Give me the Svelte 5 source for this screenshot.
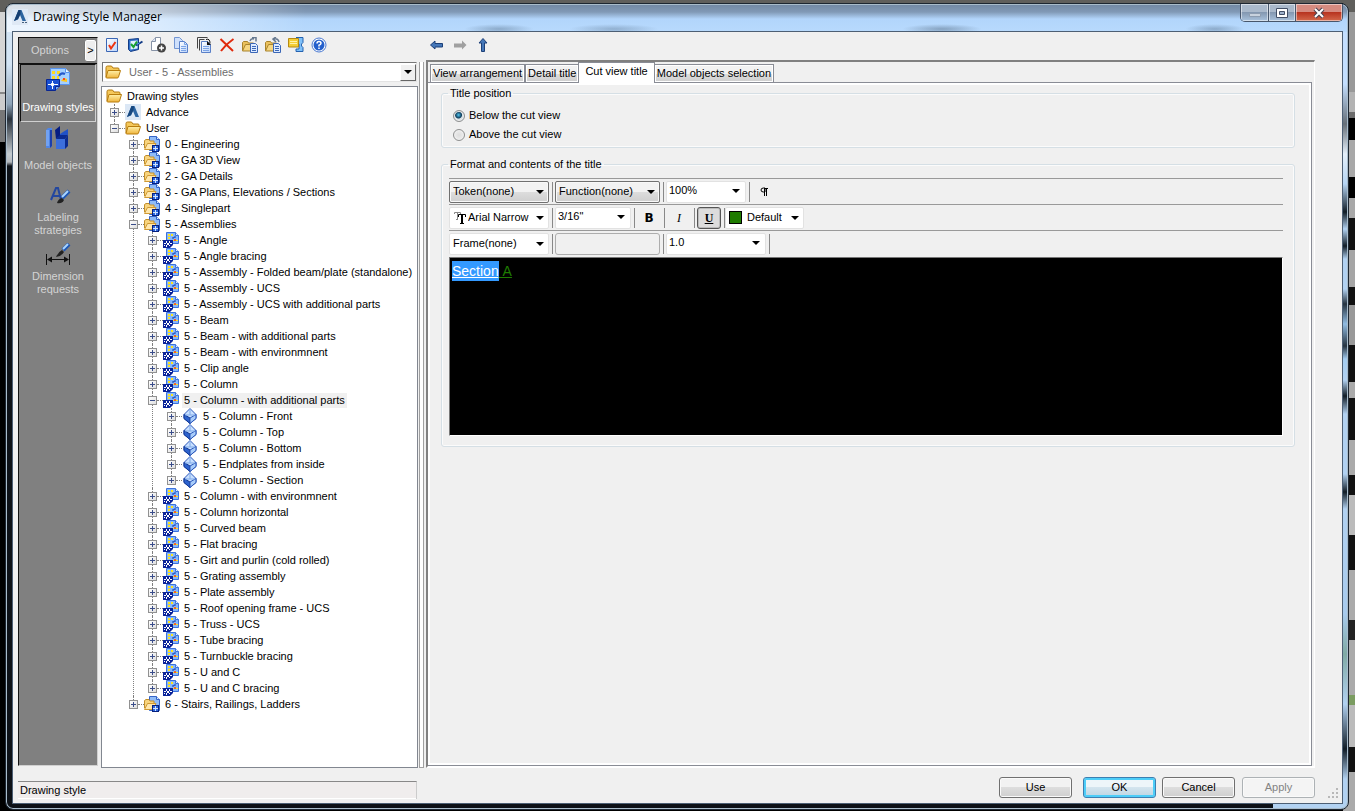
<script lang="ts">
    type Node = { name: string; icon: string; open?: boolean; selected?: boolean; children?: Node[] };

    const style = (name: string): Node => ({ name, icon: "style", open: false });
    const group = (name: string): Node => ({ name, icon: "group", open: false });
    const cube = (name: string): Node => ({ name, icon: "cube", open: false });

    let root: Node = $state({
        name: "Drawing styles",
        icon: "folder",
        open: true,
        children: [
            { name: "Advance", icon: "advance", open: false },
            {
                name: "User",
                icon: "folder",
                open: true,
                children: [
                    group("0 - Engineering"),
                    group("1 - GA 3D View"),
                    group("2 - GA Details"),
                    group("3 - GA Plans, Elevations / Sections"),
                    group("4 - Singlepart"),
                    {
                        name: "5 - Assemblies",
                        icon: "group",
                        open: true,
                        children: [
                            style("5 - Angle"),
                            style("5 - Angle bracing"),
                            style("5 - Assembly - Folded beam/plate (standalone)"),
                            style("5 - Assembly - UCS"),
                            style("5 - Assembly - UCS with additional parts"),
                            style("5 - Beam"),
                            style("5 - Beam - with additional parts"),
                            style("5 - Beam - with environmnent"),
                            style("5 - Clip angle"),
                            style("5 - Column"),
                            {
                                name: "5 - Column - with additional parts",
                                icon: "style",
                                open: true,
                                selected: true,
                                children: [
                                    cube("5 - Column - Front"),
                                    cube("5 - Column - Top"),
                                    cube("5 - Column - Bottom"),
                                    cube("5 - Endplates from inside"),
                                    cube("5 - Column - Section"),
                                ],
                            },
                            style("5 - Column - with environmnent"),
                            style("5 - Column horizontal"),
                            style("5 - Curved beam"),
                            style("5 - Flat bracing"),
                            style("5 - Girt and purlin (cold rolled)"),
                            style("5 - Grating assembly"),
                            style("5 - Plate assembly"),
                            style("5 - Roof opening frame - UCS"),
                            style("5 - Truss - UCS"),
                            style("5 - Tube bracing"),
                            style("5 - Turnbuckle bracing"),
                            style("5 - U and C"),
                            style("5 - U and C bracing"),
                        ],
                    },
                    group("6 - Stairs, Railings, Ladders"),
                ],
            },
        ],
    });

    const tools = ["check", "edit", "add", "copy", "paste", "delete", "export", "import", "archive", "help"];
    const tabs = ["View arrangement", "Detail title", "Cut view title", "Model objects selection"];
    const sections = [
        { icon: "styles", lines: ["Drawing styles"] },
        { icon: "objects", lines: ["Model objects"] },
        { icon: "labels", lines: ["Labeling", "strategies"] },
        { icon: "dims", lines: ["Dimension", "requests"] },
    ];

    let section = $state("styles");
    let tab = $state("Cut view title");
    let position = $state("below");
    let underline = $state(true);
</script>

{#snippet icon(name: string)}
    <svg class="icon" width="16" height="16" viewBox="0 0 16 16" aria-hidden="true">
        {#if name === "folder"}
            <path d="M1 13V3.500q0-1.500 1.500-1.500h4L8 4h5q1 0 1 1v2" fill="#f5c85a" stroke="#b47a10" />
            <path d="M1 13.500 3 6.500h12.500L13.500 13q-.3 1-1.300 1H2q-1 0-1-.5Z" fill="url(#gold)" stroke="#b87c0c" />
        {:else if name === "advance"}
            <rect width="16" height="16" fill="#dbe7f5" />
            <path d="M2 13 6.500 2h3L14 13h-3.500L8 7l-2 4.500Z" fill="#2c66a4" />
            <path d="m2 13 4-2 2.500-5 .5-4H6.500Z" fill="#17477f" />
        {:else if name === "group"}
            <path d="M5.500.500h7l3 3v11h-10Z" fill="#8fbbf7" stroke="#3464c8" />
            <path d="M12.500.500v3h3" fill="#d9ebff" stroke="#3464c8" />
            <path d="M.500 12V4.500L2 3.500h3l1 1.500h4v3" fill="#f8d47e" stroke="#c28e2a" />
            <path d="m.500 13.500 3-6h8.500l-3 6Z" fill="#ffe7ad" stroke="#cf9a35" />
            <rect x="8" y="9" width="7" height="7" fill="#06207d" />
            <rect x="9" y="10" width="5" height="5" fill="#2a66e0" />
            <path d="M11.500 10v5M9 12.500h5" stroke="#cfe3ff" />
        {:else if name === "style"}
            <path d="M3.500.500h9l3 3v8h-12Z" fill="#86b7fb" stroke="#3c72dd" />
            <path d="M12.500.500v3h3" fill="#e3f1ff" stroke="#3c72dd" />
            <path d="M5 2h2v2H5zM8 2h2v2H8zM5 5h2v2H5z" fill="#ffe41c" />
            <path d="M9 6h2V5h2" fill="none" stroke="#123fb2" />
            <path d="M11 7h2v2h-2z" fill="#f0622a" />
            <path d="M9 8h2v1H9zM13 8h2v1h-2z" fill="#ffe41c" />
            <path d="M0 8h10v5l-3 3H0Z" fill="#0a2399" />
            <path d="M3 9h1v2H3zM6 9h1v2H6zM1 11h2v1H1zM7 11h2v1H7zM4 11h2v2H4zM3 13h1v2H3zM6 13h1v1H6zM1 13h1v1H1z" fill="#fff" />
        {:else if name === "cube"}
            <path d="m8 .500 6 6v4l-6 5-6-5v-4Z" fill="#c8e0ff" stroke="#2b57ba" />
            <path d="m2 6.500 6 3.500v5.500l-6-5Z" fill="#2c62cd" stroke="#123793" />
            <path d="m14 6.500-6 3.500v5.500l6-5Z" fill="#a9cdfa" stroke="#2b57ba" />
            <path d="M8 1v6L3 7M8 7l5 0" fill="none" stroke="#7ea9e8" />
        {:else if name === "check"}
            <path d="M2.500 1.500h11v13h-11Z" fill="url(#paper)" stroke="#3a66b5" />
            <path d="m5 8 2 3.500L11.500 5" fill="none" stroke="#ed3411" stroke-width="2" />
        {:else if name === "edit"}
            <path d="m1.500 2.500 10-1v11l-8 2-2-2Z" fill="#2f70c9" stroke="#123b86" />
            <path d="m3.500 4 7-.5v8l-7 1Z" fill="#dff0ff" />
            <path d="m4 7 2.500 3L10 4.500" fill="none" stroke="#19a332" stroke-width="2" />
            <path d="m9 8.500 6.500-4" stroke="#123b86" stroke-width="2" />
            <path d="m10 7.500 3-2" stroke="#4b96ea" />
        {:else if name === "add"}
            <path d="M1.500 13.500v-9l4-4h5v13Z" fill="#fff" stroke="#8793a7" />
            <path d="M1.500 4.500h4v-4" fill="#dbe4f3" stroke="#8793a7" />
            <circle cx="11.500" cy="11" r="4.500" fill="#444" />
            <path d="M11.500 8.500v5M9 11h5" stroke="#fff" stroke-width="1.500" />
        {:else if name === "copy"}
            <path d="M1.500.500h5l3 3v8h-8Z" fill="#cfe0fb" stroke="#7295d2" />
            <path d="M6.500 4.500h5l3 3v8h-8Z" fill="url(#paper)" stroke="#5a80c8" />
            <path d="M11.500 4.500v3h3M8 9.500h5M8 11.500h5M8 13.500h5" fill="none" stroke="#7ba4e6" />
        {:else if name === "paste"}
            <path d="M1.500 11.500V.500h10M3.500 13.500V2.500h5" fill="none" stroke="#444" />
            <path d="M5.500 4.500h6l3 3v8h-9Z" fill="url(#paper)" stroke="#5a80c8" />
            <path d="M7 9.500h6M7 11.500h6M7 13.500h6" stroke="#7ba4e6" />
            <path d="M10 2.500q4-1.500 4 4" fill="none" stroke="#111" />
            <path d="M11 4v4h4Z" fill="#111" />
        {:else if name === "delete"}
            <path d="M1.500 2 14 14M14.500 2Q7 7 2 14" fill="none" stroke="#e0290b" stroke-width="2" />
        {:else if name === "export" || name === "import"}
            <path d="M.500 13.500v-8l1-1h4l1 1.500h5v2" fill="#eac05c" stroke="#a8832c" />
            <path d="m.500 14 3-6.500h9l-2 6.500Z" fill="#f6d680" stroke="#a8832c" />
            {#if name === "export"}
                <path d="M8 4q1-3 4-2M10 .500h4v4" fill="none" stroke="#65788f" stroke-width="1.500" />
            {:else}
                <path d="M14 5q-1-4-5-3M11 0 8 2l3 3" fill="none" stroke="#65788f" stroke-width="1.500" />
            {/if}
            <path d="M8.500 6.500h5l2 2v7h-7Z" fill="#dceaff" stroke="#3b67b7" />
            <path d="M10 9.500h4M10 11.500h4M10 13.500h4" stroke="#3b67b7" />
        {:else if name === "archive"}
            <path d="M8 .500h7v5L13.500 7v2l1.500 1.500v4H8V12h3V7" fill="#7fc0f8" stroke="#2462b0" />
            <path d="M.500 1.500h10v8.500H.500Z" fill="#f4ce36" stroke="#b68a12" />
            <path d="M2 4.500h7M2 6.500h7" stroke="#fff3a9" />
        {:else if name === "help"}
            <circle cx="8" cy="8" r="7" fill="#fff" stroke="#4a79d0" />
            <circle cx="8" cy="8" r="5.500" fill="#2460cc" />
            <path d="M6 6.500q0-2 2-2t2 1.800Q10 7.500 8 8.200V9.500M8 10.500V12" fill="none" stroke="#fff" stroke-width="1.500" />
        {:else if name === "left"}
            <path d="M1.500 8 6 4v2.500h7.500v3.500H6v2Z" fill="#4577b8" stroke="#1d4078" />
        {:else if name === "right"}
            <path d="M14.500 8 10 3.500v3H2v4h8v2Z" fill="#a0a0a0" />
        {:else if name === "up"}
            <path d="M8 1.500 12 6H9.500v8.500h-3V6H4Z" fill="#4577b8" stroke="#1d4078" />
        {/if}
    </svg>
{/snippet}

{#snippet bigIcon(name: string)}
    <svg class="big-icon" width="26" height="24" viewBox="0 0 26 24" aria-hidden="true">
        {#if name === "styles"}
            <path d="M5.500.500h15l4 4v12h-19Z" fill="#a5d0ff" stroke="#5793ee" />
            <path d="M20.500.500v4h4" fill="#e8f4ff" stroke="#5793ee" />
            <path d="M7 3h3v3H7zM12 3h3v3h-3zM7 8h3v3H7zM12 8h2v3h-2z" fill="#ffd91f" />
            <path d="M14 8q2-4 6-2" fill="none" stroke="#2458cc" stroke-width="2" />
            <path d="M16 13q2-4 6-2v3Z" fill="#ffc719" />
            <path d="M18 10h2v2h-2z" fill="#ef4925" />
            <path d="M1.500 11.500h13v7l-4 4h-9Z" fill="#1950d1" stroke="#0a2690" />
            <path d="M10.500 22.500v-4h4" fill="#6fa7ff" stroke="#0a2690" />
            <path d="M7.500 13v8M3 16.500h10" stroke="#fff" />
            <path d="m5.500 16.500 2-2 2 2-2 2Z" fill="none" stroke="#dcebff" />
        {:else if name === "objects"}
            <path d="m1 4 2-2h4v18l-2 2H1Z" fill="#4f85e6" />
            <path d="M5 4h2v16l-2 2Z" fill="#1c3fae" />
            <path d="M1 4h3v16H1Z" fill="#72a2f2" />
            <path d="m10 4 5-4v10l-4 3Z" fill="#061d83" />
            <path d="m15 8 3-2 5-3v6H15Z" fill="#2152c7" />
            <path d="m11 13 4-4h8l-3 4Z" fill="#0b2b91" />
            <path d="M11 13h9v10h-9Z" fill="#3d6fdc" />
            <path d="m20 13 3-4v11l-3 3Z" fill="#0b2b91" />
        {:else if name === "labels"}
            <path d="m6 16 5-12h2l3 12M8 12h7" fill="none" stroke="#23479f" stroke-width="2" />
            <path d="m17 14 7-7" stroke="#1c55b4" stroke-width="4" />
            <path d="m17 13 6-6" stroke="#a9d5ff" stroke-width="2" />
            <path d="M12 19q1-4 5-5l2 2q-2 4-7 3Z" fill="#222" />
        {:else}
            <path d="M1.500 11v11M24.500 11v11M3 16.500h20" stroke="#111" />
            <path d="m2 16.500 5-3v6ZM24 16.500l-5-3v6Z" fill="#111" />
            <path d="m18 7 6-6" stroke="#1c55b4" stroke-width="4" />
            <path d="m18 6 5-5" stroke="#a9d5ff" stroke-width="2" />
            <path d="M11 14q2-5 6-7l2 2q-2 4-8 5Z" fill="#222" />
        {/if}
    </svg>
{/snippet}

{#snippet branch(node: Node, top: boolean)}
    <li class:top>
        <div class="row">
            {#if !top}
                <span class="cell">
                    <button class="expander" aria-label={`Toggle ${node.name}`} onclick={() => (node.open = !node.open)}>
                        <svg width="7" height="7" viewBox="0 0 7 7">
                            <path d={node.open ? "M1 3.500h5" : "M1 3.500h5M3.500 1v5"} stroke="#3a4d8a" />
                        </svg>
                    </button>
                </span>
            {/if}
            {@render icon(node.icon)}
            <span class="name" class:selected={node.selected}>{node.name}</span>
        </div>
        {#if node.open && node.children}
            <ul class:nested={!top}>
                {#each node.children as child}
                    {@render branch(child, false)}
                {/each}
            </ul>
        {/if}
    </li>
{/snippet}

<svg class="defs" width="0" height="0" aria-hidden="true">
    <defs>
        <linearGradient id="gold" x1="0" y1="0" x2="0" y2="1">
            <stop offset="0" stop-color="#fff0a8" />
            <stop offset="1" stop-color="#efb43c" />
        </linearGradient>
        <linearGradient id="paper" x1="0" y1="0" x2="1" y2="1">
            <stop offset="0" stop-color="#fff" />
            <stop offset="1" stop-color="#b9d3fb" />
        </linearGradient>
    </defs>
</svg>

<div class="desktop">
    <div class="window">
        <header class="titlebar">
            <svg class="logo" width="16" height="16" viewBox="0 0 16 16" aria-hidden="true">
                <rect width="16" height="16" fill="#dfe9f5" />
                <path d="M2 12 6.500 1h3L14 12h-3.500L8 6l-2 4.500Z" fill="#2d659f" />
                <path d="m2 12 4-2 2.500-5V1h-2Z" fill="#173f70" />
                <path d="M10 13.500h2M13 13.500h2" fill="none" stroke="#46617e" />
            </svg>
            <h1>Drawing Style Manager</h1>
            <div class="captions">
                <button class="min" aria-label="Minimize">
                    <svg width="14" height="12" viewBox="0 0 14 12"><path d="M1.500 6.500h11v3h-11Z" fill="#c8d2de" stroke="#8c9cb0" /></svg>
                </button>
                <button class="max" aria-label="Maximize">
                    <svg width="14" height="12" viewBox="0 0 14 12">
                        <path d="M1.500 1.500h11v9h-11Z" fill="#fff" stroke="#424f66" />
                        <path d="M4.500 4.500h5v3h-5Z" fill="#9fb2cc" stroke="#424f66" />
                    </svg>
                </button>
                <button class="close" aria-label="Close">
                    <svg width="14" height="12" viewBox="0 0 14 12">
                        <path d="m3 2 8 8M11 2l-8 8" stroke="#4a4351" stroke-width="4" />
                        <path d="m3 2 8 8M11 2l-8 8" stroke="#fff" stroke-width="2" />
                    </svg>
                </button>
            </div>
        </header>

        <div class="client">
            <main>
                <nav class="sidebar">
                    <div class="options">
                        <span>Options</span>
                        <button aria-label="Collapse options">&gt;</button>
                    </div>
                    {#each sections as s}
                        <button class="section" class:current={section === s.icon} class:tight={s.lines.length > 1} onclick={() => (section = s.icon)}>
                            {@render bigIcon(s.icon)}
                            <span>
                                {#each s.lines as line}
                                    <span class="line">{line}</span>
                                {/each}
                            </span>
                        </button>
                    {/each}
                </nav>

                <section class="browser">
                    <div class="toolbar">
                        {#each tools as t}
                            <button aria-label={t}>{@render icon(t)}</button>
                        {/each}
                    </div>
                    <div class="path">
                        {@render icon("folder")}
                        <select aria-label="Current folder">
                            <option>User - 5 - Assemblies</option>
                        </select>
                        <span class="path-arrow"></span>
                    </div>
                    <ul class="tree">
                        {@render branch(root, true)}
                    </ul>
                </section>

                <div class="splitter"></div>

                <section class="editor">
                    <div class="toolbar">
                        <button aria-label="Back">{@render icon("left")}</button>
                        <button aria-label="Forward" disabled>{@render icon("right")}</button>
                        <button aria-label="Up">{@render icon("up")}</button>
                    </div>
                    <div class="panel">
                        <div class="tabs" role="tablist">
                            {#each tabs as t}
                                <button role="tab" aria-selected={tab === t} class:active={tab === t} onclick={() => (tab = t)}>{t}</button>
                            {/each}
                        </div>
                        <div class="page">
                            <fieldset class="position">
                                <legend>Title position</legend>
                                <label><input type="radio" value="below" bind:group={position} />Below the cut view</label>
                                <label><input type="radio" value="above" bind:group={position} />Above the cut view</label>
                            </fieldset>

                            <fieldset class="format">
                                <legend>Format and contents of the title</legend>
                                <div class="bar">
                                    <span class="drop raised medium"><select aria-label="Token"><option>Token(none)</option></select></span>
                                    <i class="sep"></i>
                                    <span class="drop raised wide"><select aria-label="Function"><option>Function(none)</option></select></span>
                                    <i class="sep"></i>
                                    <span class="drop combo scale"><select aria-label="Scale"><option>100%</option></select></span>
                                    <i class="sep"></i>
                                    <button class="toggle" aria-label="Paragraph">
                                        <svg width="9" height="9" viewBox="0 0 9 9"><path d="M5 1H3.500Q1 1 1 3t2.500 2H5Z" fill="none" stroke="#000" /><path d="M4.500 1v8M6.500 1v8M4 1.500h4" fill="none" stroke="#000" /></svg>
                                    </button>
                                </div>
                                <div class="bar">
                                    <span class="drop medium font">
                                        <svg width="14" height="13" viewBox="0 0 14 13" aria-hidden="true">
                                            <path d="M1.500 3V1.500h6V3M4.500 2v6M3 8.500h2" fill="none" stroke="#888" />
                                            <path d="M5.500 6V3.500h7V6M7 12.500h4" fill="none" stroke="#000" />
                                            <path d="M9 3v9" stroke="#000" stroke-width="2" />
                                        </svg>
                                        <select aria-label="Font"><option>Arial Narrow</option></select>
                                    </span>
                                    <i class="sep"></i>
                                    <span class="drop combo size"><select aria-label="Text height"><option>3/16"</option></select></span>
                                    <i class="sep"></i>
                                    <button class="toggle bold">B</button>
                                    <i class="sep"></i>
                                    <button class="toggle italic">I</button>
                                    <i class="sep"></i>
                                    <button class="toggle under" class:pressed={underline} aria-pressed={underline} onclick={() => (underline = !underline)}>U</button>
                                    <i class="sep"></i>
                                    <span class="drop color"><i class="swatch"></i><select aria-label="Color"><option>Default</option></select></span>
                                </div>
                                <div class="bar">
                                    <span class="drop medium"><select aria-label="Frame"><option>Frame(none)</option></select></span>
                                    <i class="sep"></i>
                                    <input class="blank wide" aria-label="Frame value" disabled />
                                    <i class="sep"></i>
                                    <span class="drop combo medium"><select aria-label="Line spacing"><option>1.0</option></select></span>
                                    <i class="sep"></i>
                                </div>
                                <div class="canvas" class:plain={!underline} contenteditable="true" role="textbox" aria-label="Title contents" tabindex="0"><u class="picked">Section</u><u>&nbsp;A</u></div>
                            </fieldset>
                        </div>
                    </div>
                </section>
            </main>

            <footer>
                <div class="status">Drawing style</div>
                <div class="actions">
                    <button class="use">Use</button>
                    <button class="ok">OK</button>
                    <button class="cancel">Cancel</button>
                    <button disabled>Apply</button>
                </div>
                <svg class="grip" width="11" height="11" viewBox="0 0 11 11" aria-hidden="true">
                    <path d="M8 0h2v2H8zM4 4h2v2H4zM8 4h2v2H8zM0 8h2v2H0zM4 8h2v2H4zM8 8h2v2H8z" fill="#b8b8b8" />
                </svg>
            </footer>
        </div>
    </div>
</div>

<style>
    :global(body) {
        margin: 0;
        background: #000;
    }

    .defs {
        position: absolute;
    }

    .desktop {
        box-sizing: border-box;
        min-height: 100vh;
        display: grid;
        padding: 3px 6px 1px 5px;
        font: 11px/13px "Liberation Sans", Arial, sans-serif;
        color: #000;
        background:
            linear-gradient(#605f5c 3px, transparent 3px),
            linear-gradient(#605f5c 12px, #d5d5d5 12px 92px, #888 92px 94px, #ccc 94px 110px, #777 110px 142px, #000 142px) left / 12px 100% no-repeat,
            linear-gradient(#605f5c 12px, #999 12px 92px, #b3b3b3 92px 112px, #6c6c6c 112px 118px, #000 118px 140px, #a8a8a8 140px 177px, #000 177px 198px, #a8a8a8 198px 218px, #111 218px 250px, #a5a5a5 250px 287px, #111 287px 305px, #999 305px 345px, #111 345px 382px, #aaa 382px 398px, #111 398px 440px, #aaa 440px 475px, #111 475px 495px, #bbb 495px 535px, #111 535px 570px, #aaa 570px 620px, #222 620px 640px, #aaa 640px 695px, #7b9c61 695px 705px, #bbb 705px 747px, #111 747px 772px, #aaa 772px) right / 12px 100% no-repeat,
            #000;
    }

    .window {
        display: flex;
        flex-direction: column;
        box-sizing: border-box;
        padding: 0 5px 5px 6px;
        border: 1px solid #1d2631;
        border-radius: 8px;
        box-shadow: inset 0 0 0 1px #a9bccb;
        background:
            linear-gradient(90deg, rgba(255, 255, 255, .75), rgba(255, 255, 255, .5) 150px, transparent 300px) top / 100% 28px no-repeat,
            radial-gradient(ellipse, rgba(75, 100, 125, .4), transparent 70%) 36% 20px / 70px 10px no-repeat,
            radial-gradient(ellipse, rgba(75, 100, 125, .35), transparent 70%) 45% 20px / 90px 10px no-repeat,
            radial-gradient(ellipse, rgba(60, 80, 100, .4), transparent 70%) 71% 20px / 80px 10px no-repeat,
            radial-gradient(ellipse, rgba(75, 100, 125, .4), transparent 70%) 92% 20px / 60px 10px no-repeat,
            linear-gradient(#7187a2, #8199b6 8px, #b2d5fb 15px, #b8dafd 28px, transparent 28px),
            linear-gradient(#d3e4f4 60px, #8fa4b8 100px, #29313a 115px, #c4cbd0 150px, #b5b9bd 158px, #0d1117 162px) left / calc(100% - 75px) 100% no-repeat,
            linear-gradient(#c4dfff 80px, #666f78 120px, #e5f0fb 150px, #b6d5f4 180px, #111c26 208px, #b2d2f2 225px, #111c26 242px, #b2d2f2 255px, #b2d2f2 285px, #263340 300px, #91bce2 320px, #263340 342px, #a3ccf0 355px, #b2d2f2 376px, #111c26 392px, #b2d2f2 410px, #b2d2f2 470px, #111c26 488px, #b2d2f2 505px, #a8cbee 610px, #80aaa5 650px, #b2d2f2 700px, #111c26 745px, #b2d2f2 775px) right / 75px 100% no-repeat;
    }

    .titlebar {
        display: flex;
        align-items: flex-start;
        height: 27px;
    }

    .logo {
        margin: 5px 5px 0 0;
    }

    h1 {
        flex: 1;
        margin: 5px 0 0;
        font: 12px/16px "Open Sans", "Noto Sans", sans-serif;
    }

    .captions {
        display: flex;
        border: 1px solid #47566b;
        border-top: 0;
        border-radius: 0 0 5px 5px;
        overflow: hidden;
    }

    .captions button {
        display: grid;
        place-items: center;
        height: 17px;
        padding: 0;
        border: 0;
        box-shadow: inset 0 0 0 1px rgba(255, 255, 255, .5);
        background: linear-gradient(#aab9cb 50%, #8498b1 50%, #a9c2dc);
    }

    .captions .min {
        width: 27px;
    }

    .captions .max {
        width: 27px;
        border-left: 1px solid #47566b;
    }

    .captions .close {
        width: 47px;
        border-left: 1px solid #47566b;
        background: linear-gradient(#d68b80 45%, #b52f1c 45%, #d4694c);
    }

    .client {
        flex: 1;
        display: flex;
        flex-direction: column;
        padding: 0 1px 4px 5px;
        border: 1px solid #4d5f74;
        background: #f0f0f0;
    }

    main {
        flex: 1;
        display: flex;
        padding-right: 26px;
    }

    button {
        font: inherit;
        color: inherit;
    }

    .icon {
        display: block;
        flex: none;
    }

    /* left strip */
    .sidebar {
        box-sizing: border-box;
        width: 80px;
        margin: 5px 0 2px;
        border: 1px solid #111;
        border-right-color: #d0d0d0;
        border-bottom-color: #d0d0d0;
        background: #808080;
        color: #d4d4d4;
    }

    .options {
        display: flex;
        align-items: center;
        justify-content: space-between;
        height: 25px;
        padding-left: 12px;
        border-bottom: 1px solid #111;
    }

    .options button {
        width: 13px;
        height: 23px;
        padding: 0;
        border: 1px solid #777;
        border-radius: 3px;
        background: #eee;
        box-shadow: inset 0 0 0 1px #fff;
        color: #000;
    }

    .section {
        display: flex;
        flex-direction: column;
        align-items: center;
        box-sizing: border-box;
        gap: 9px;
        width: 76px;
        margin: 0 1px;
        padding: 3px 0 7px;
        border: 1px solid transparent;
        background: none;
    }

    .section.current {
        border-color: #111 #d0d0d0 #d0d0d0 #111;
        color: #fff;
    }

    .section.tight {
        gap: 3px;
        padding-bottom: 1px;
    }

    .line {
        display: block;
        white-space: nowrap;
    }

    /* tree side */
    .browser {
        display: flex;
        flex-direction: column;
        width: 317px;
        margin-left: 3px;
    }

    .toolbar {
        display: flex;
        gap: 7px;
        height: 25px;
        padding: 5px 0 0 3px;
        box-sizing: border-box;
    }

    .toolbar button {
        padding: 0;
        border: 0;
        height: 16px;
        background: none;
    }

    .path {
        position: relative;
        display: flex;
        align-items: center;
        box-sizing: border-box;
        height: 20px;
        margin: 5px 1px 4px;
        padding-left: 2px;
        border: 1px solid #777;
        border-right-color: #e3e3e3;
        border-bottom-color: #e3e3e3;
        background: #fff;
    }

    select {
        flex: 1;
        min-width: 0;
        appearance: none;
        margin: 0;
        padding: 0;
        border: 0;
        outline: 0;
        background: none;
        font: inherit;
        color: inherit;
    }

    .path select {
        padding-left: 8px;
        color: #6d6d6d;
    }

    .path-arrow {
        box-sizing: border-box;
        display: grid;
        place-items: center;
        width: 16px;
        height: 17px;
        border: 1px solid #fff;
        border-right-color: #666;
        border-bottom-color: #666;
        background: #f0f0f0;
        pointer-events: none;
    }

    .path-arrow::after,
    .drop::after {
        content: "";
        border: 4px solid transparent;
        border-top-color: #000;
        border-bottom: 0;
        pointer-events: none;
    }

    ul {
        margin: 0;
        padding: 0;
        list-style: none;
    }

    .tree {
        flex: 1;
        padding: 1px 4px;
        border: 1px solid #828790;
        background: #fff;
    }

    .nested {
        margin-left: 19px;
    }

    li {
        position: relative;
    }

    li:not(.top)::before {
        content: "";
        position: absolute;
        top: 0;
        bottom: 0;
        left: 8px;
        border-left: 1px dotted #808080;
    }

    li:not(.top):last-child::before {
        bottom: auto;
        height: 8px;
    }

    .row {
        display: flex;
        align-items: center;
        height: 16px;
        white-space: nowrap;
    }

    .cell {
        position: relative;
        flex: none;
        width: 19px;
        height: 9px;
        padding-left: 4px;
        box-sizing: border-box;
    }

    .cell::after {
        content: "";
        position: absolute;
        top: 4px;
        left: 13px;
        width: 6px;
        border-top: 1px dotted #808080;
    }

    .expander {
        display: grid;
        box-sizing: border-box;
        width: 9px;
        height: 9px;
        padding: 0;
        border: 1px solid #919191;
        background: linear-gradient(135deg, #fff, #dedede);
    }

    .name {
        padding: 1px 2px;
        margin-left: 3px;
    }

    .name.selected {
        background: #f0f0f0;
    }

    .splitter {
        width: 3px;
        margin: 30px 0 0 1px;
        border: 1px solid #a0a0a0;
        border-top: 0;
        background: #fff;
    }

    /* title editor */
    .editor {
        flex: 1;
        display: flex;
        flex-direction: column;
        min-width: 0;
        margin-left: 2px;
    }

    .panel {
        flex: 1;
        display: flex;
        flex-direction: column;
        margin-top: 3px;
        border: 2px solid #808080;
        border-right: 1px solid #fff;
        border-bottom: 2px solid #fff;
    }

    .tabs {
        display: flex;
        align-items: flex-end;
        height: 20px;
        padding-left: 2px;
    }

    .tabs button {
        height: 18px;
        padding: 0 2px;
        border: 1px solid #898c95;
        border-bottom: 0;
        background: linear-gradient(#f2f2f2 50%, #ddd 50%, #cfcfcf);
        box-shadow: inset 0 0 0 1px #fff;
        white-space: nowrap;
    }

    .tabs .active {
        position: relative;
        height: 21px;
        margin: 0 -1px -1px;
        padding: 0 6px 4px;
        background: #fff;
    }

    .page {
        flex: 1;
        margin-right: 2px;
        padding: 4px 16px 0 13px;
        border: 1px solid #898c95;
        border-left: 0;
        box-shadow: inset 0 0 0 2px #fff;
    }

    fieldset {
        min-width: 0;
        margin: 0;
        padding: 0 11px 0 7px;
        border: 1px solid #d5dfe5;
        border-radius: 3px;
        box-shadow: inset 0 0 0 1px #fbfbfb;
    }

    legend {
        margin-left: -1px;
        padding: 0 2px;
    }

    .position {
        height: 59px;
        padding-left: 11px;
        margin-bottom: 10px;
    }

    .position legend {
        margin-left: -5px;
    }

    label {
        display: flex;
        align-items: center;
        width: max-content;
        height: 19px;
        gap: 4px;
    }

    .position legend + label {
        margin-top: 6px;
    }

    input[type="radio"] {
        appearance: none;
        box-sizing: border-box;
        width: 12px;
        height: 12px;
        margin: 0;
        border: 1px solid #8e8f8f;
        border-radius: 50%;
        background: radial-gradient(#ddd, #f4f4f4);
        box-shadow: inset 0 0 0 1px #eee;
    }

    input[type="radio"]:checked {
        background: radial-gradient(circle at 45% 40%, #53c5ee, #0e3d5c 3px, #d8e0e5 4px);
    }

    .format {
        padding-bottom: 10px;
    }

    .format legend {
        margin-bottom: 7px;
    }

    .bar {
        display: flex;
        align-items: center;
        height: 25px;
        border-top: 1px solid #999;
    }

    .sep {
        flex: none;
        width: 1px;
        height: 20px;
        margin: 0 2px 0 3px;
        background: #888;
    }

    .drop {
        display: flex;
        align-items: center;
        box-sizing: border-box;
        height: 22px;
        padding: 0 4px 0 3px;
        border: 1px solid #e2e2e2;
        border-radius: 2px;
        background: #fff;
    }

    .raised {
        border-color: #707070;
        background: linear-gradient(#f2f2f2 50%, #ddd 50%, #cfcfcf);
        box-shadow: inset 0 0 0 1px #f8f8f8;
    }

    .combo {
        padding: 0 5px 2px 2px;
    }

    .medium {
        width: 100px;
    }

    .wide {
        width: 105px;
    }

    .scale {
        width: 80px;
    }

    .size {
        width: 76px;
    }

    .color {
        width: 79px;
        margin-left: -2px;
    }

    .font svg {
        margin-right: 1px;
    }

    .swatch {
        box-sizing: border-box;
        width: 13px;
        height: 13px;
        margin-right: 5px;
        border: 1px solid #000;
        background: #1e7b00;
    }

    .toggle {
        display: grid;
        place-items: center;
        width: 24px;
        height: 22px;
        padding: 0;
        border: 0;
        background: none;
        font: bold 12px/14px "Liberation Serif", "Times New Roman", serif;
    }

    .bold {
        font-family: "DejaVu Sans", sans-serif;
    }

    .italic {
        font-weight: normal;
        font-style: italic;
    }

    .under {
        text-decoration: underline;
    }

    .pressed {
        border: 1px solid #555;
        border-radius: 3px;
        background: #dcdcdc;
        box-shadow: inset 0 0 0 1px #bbb;
    }

    .blank {
        box-sizing: border-box;
        height: 22px;
        padding: 0;
        border: 1px solid #adadad;
        border-radius: 3px;
        background: #f0f0f0;
    }

    .canvas {
        height: 174px;
        margin-top: 1px;
        padding: 3px 2px 0;
        border: 1px solid #777;
        border-right-color: #fff;
        border-bottom-color: #fff;
        background: #000;
        color: #1e7b00;
        font: 14px/20px "Liberation Sans Narrow", "Liberation Sans", sans-serif;
    }

    .plain u {
        text-decoration: none;
    }

    .picked {
        display: inline-block;
        background: #3399ff;
        color: #fff;
    }

    /* bottom row */
    footer {
        position: relative;
        display: flex;
        align-items: flex-start;
        justify-content: space-between;
        padding: 9px 26px 0 0;
    }

    .status {
        box-sizing: border-box;
        width: 399px;
        height: 18px;
        margin-top: 4px;
        padding: 2px;
        border-top: 1px solid #888;
        border-right: 1px solid #ccc;
        background: #f0eded;
        box-shadow: inset 0 -1px #fff;
    }

    .actions {
        display: flex;
        gap: 6px;
    }

    .actions .use {
        margin-right: 5px;
    }

    .actions button {
        width: 73px;
        height: 21px;
        padding: 0;
        border: 1px solid #707070;
        border-radius: 3px;
        background: linear-gradient(#f2f2f2 50%, #ddd 50%, #cfcfcf);
        box-shadow: inset 0 0 0 1px #fafafa;
    }

    .actions .ok {
        border-color: #3c7fb1;
        background: linear-gradient(#edf5f9 50%, #d3e4ee 50%, #bdd5e2);
        box-shadow: inset 0 0 0 2px #4dcdf8;
    }

    .actions button:disabled {
        border-color: #adb2b5;
        background: #f4f4f4;
        color: #838383;
    }

    .actions .cancel {
        margin-right: 1px;
    }

    .grip {
        position: absolute;
        right: 2px;
        bottom: 0;
    }
</style>
